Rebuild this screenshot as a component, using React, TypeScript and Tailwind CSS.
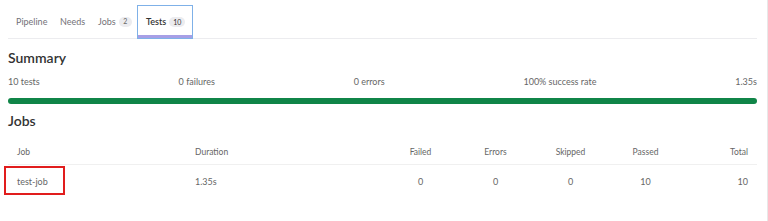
import React from "react";

const font = { fontFamily: 'Lato, "Noto Sans", sans-serif' };

export default function App() {
  const cols = [
    { h: "Failed", v: "0" },
    { h: "Errors", v: "0" },
    { h: "Skipped", v: "0" },
    { h: "Passed", v: "10" },
  ];
  return (
    <div
      className="h-[221px] w-[768px] overflow-hidden border-r border-[#e8e8e8] bg-white pl-[8px] pr-[10px] text-[#666]"
      style={font}
    >
      {/* tabs */}
      <div className="flex h-[39px] items-end border-b border-[#ececef]">
        <div className="flex h-[33px] w-[45px] items-center pl-[8px] text-[9px] text-[#737278]">Pipeline</div>
        <div className="flex h-[33px] w-[38px] items-center pl-[7px] text-[9px] text-[#737278]">Needs</div>
        <div className="flex h-[33px] w-[46px] items-center pl-[7px] text-[9px] text-[#737278]">
          Jobs
          <span className="ml-[3px] inline-flex h-[10px] w-[13px] items-center justify-center rounded-full bg-[#ececef] text-[7px] leading-none text-[#666]">
            2
          </span>
        </div>
        <div className="relative mb-[-1px] flex h-[34px] w-[56px] items-center border border-[#7fb1e8] pl-[8px] text-[9px] font-semibold text-[#333]">
          Tests
          <span className="ml-[3px] inline-flex h-[10px] w-[16px] items-center justify-center rounded-full bg-[#ececef] text-[7px] font-normal leading-none text-[#333]">
            10
          </span>
          <div className="absolute bottom-0 left-0 right-0 h-[3px] bg-[#a79fe6]" />
        </div>
      </div>

      {/* summary */}
      <div className="pt-[11px] text-[14px] font-semibold leading-[16px] text-[#333]">Summary</div>
      <div className="mt-[10px] flex justify-between text-[9px] leading-[12px]">
        <span>10 tests</span>
        <span>0 failures</span>
        <span>0 errors</span>
        <span>100% success rate</span>
        <span>1.35s</span>
      </div>
      <div className="mt-[10px] h-[6px] w-full rounded-full bg-[#108548]" />

      {/* jobs */}
      <div className="pt-[9px] text-[14px] font-semibold leading-[16px] text-[#333]">Jobs</div>
      <div className="mt-[12px] flex h-[24px] items-center border-b border-[#f0f0f0] text-[8.5px] text-[#666]">
        <div className="w-[178px] pl-[9px]">Job</div>
        <div className="w-[197px] pl-[9px]">Duration</div>
        {cols.map((c) => (
          <div key={c.h} className="w-[75px] text-center">
            {c.h}
          </div>
        ))}
        <div className="flex-1 pr-[9px] text-right">Total</div>
      </div>
      <div className="flex h-[34px] items-center text-[9px] text-[#666]">
        <div className="relative w-[178px] pl-[9px]">
          test-job
          <div className="absolute left-[-4px] top-[-9px] h-[29px] w-[61px] border-2 border-[#e11d1d]" />
        </div>
        <div className="w-[197px] pl-[9px]">1.35s</div>
        {cols.map((c) => (
          <div key={c.h} className="w-[75px] text-center">
            {c.v}
          </div>
        ))}
        <div className="flex-1 pr-[9px] text-right">10</div>
      </div>
    </div>
  );
}
